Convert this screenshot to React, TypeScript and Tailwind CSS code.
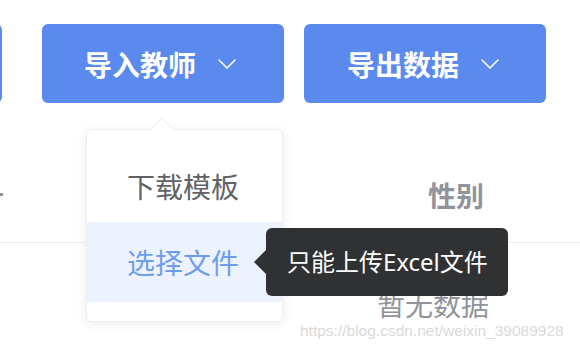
import React from "react";

function Chevron() {
  return (
    <svg width="18" height="10" viewBox="0 0 18 10" fill="none" className="block">
      <polyline points="1,1 9,9 17,1" stroke="white" strokeWidth="1.6" strokeLinecap="round" strokeLinejoin="round" />
    </svg>
  );
}

export default function App() {
  return (
    <div className="relative w-[580px] h-[346px] overflow-hidden bg-white font-['Noto_Sans_CJK_SC',sans-serif]">
      {/* toolbar */}
      <div className="flex pt-[24px] ml-[-240px]">
        <div className="w-[242px] h-[79px] rounded-[6px] bg-[#5a8aee] shrink-0" />
        <div className="ml-[40px] w-[242px] h-[79px] rounded-[6px] bg-[#5a8aee] shrink-0 flex items-center pl-[42px]">
          <span className="text-white text-[28px] leading-[28px] font-semibold">导入教师</span>
          <span className="ml-[22px]"><Chevron /></span>
        </div>
        <div className="ml-[20px] w-[242px] h-[79px] rounded-[6px] bg-[#5a8aee] shrink-0 flex items-center pl-[43px]">
          <span className="text-white text-[28px] leading-[28px] font-semibold">导出数据</span>
          <span className="ml-[22px]"><Chevron /></span>
        </div>
      </div>

      {/* table header */}
      <div className="h-[140px] border-b border-[#ebeef5] flex items-start">
        <div className="mt-[90px] w-[3px] h-[3px] bg-[#909399]" />
        <div className="ml-[425px] mt-[78px] text-[28px] leading-[28px] font-semibold text-[#909399]">性别</div>
      </div>

      {/* empty */}
      <div className="pt-[47px] pl-[377px] text-[28px] leading-[28px] text-[#909399]">暂无数据</div>

      {/* watermark */}
      <div className="absolute left-[300px] top-[322px] text-[15.5px] leading-[18px] text-[#d9d9d9] font-['Liberation_Sans',sans-serif] whitespace-nowrap">
        https://blog.csdn.net/weixin_39089928
      </div>

      {/* dropdown */}
      <div className="absolute left-[86px] top-[129px] w-[197px] h-[193px] bg-white border border-[#ebeef5] rounded-[6px] shadow-[0_2px_12px_rgba(0,0,0,0.08)] pt-[19px]">
        <div className="absolute left-[67px] top-[-9px] w-[16px] h-[16px] bg-white border-l border-t border-[#ebeef5] rotate-45" />
        <div className="h-[73px] flex items-center pl-[40px] text-[28px] leading-[28px] text-[#606266]">下载模板</div>
        <div className="h-[80px] flex items-center pl-[40px] bg-[#edf3fe] text-[28px] leading-[28px] text-[#6d9cf1]">选择文件</div>
      </div>

      {/* tooltip */}
      <div className="absolute left-[266px] top-[228px] w-[242px] h-[68px] bg-[#303133] rounded-[6px] flex items-center pl-[21px]">
        <div className="absolute left-[-12px] top-[22px] w-0 h-0 border-y-[12px] border-y-transparent border-r-[12px] border-r-[#303133]" />
        <span className="text-white text-[24px] leading-[24px] whitespace-nowrap font-['Noto_Sans','Noto_Sans_CJK_SC',sans-serif]">只能上传Excel文件</span>
      </div>
    </div>
  );
}
